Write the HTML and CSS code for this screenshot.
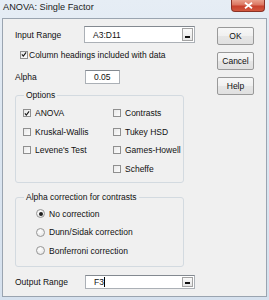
FILE: index.html
```html
<!DOCTYPE html>
<html>
<head>
<meta charset="utf-8">
<link rel="stylesheet" href="styles.css">
</head>
<body>
<div class="window">
  <div class="titlebar">
    <span class="title">ANOVA: Single Factor</span>
    <div class="close">
      <svg width="9" height="7" viewBox="0 0 9 7"><path d="M1 0.8 L8 6.2 M8 0.8 L1 6.2" stroke="#fff" stroke-width="1.8" fill="none"/></svg>
    </div>
  </div>
  <div class="client">
    <div class="form">
      <div class="field-row range-row">
        <span class="label">Input Range</span>
        <div class="input wide tall"><span class="value">A3:D11</span><span class="pick"><span class="bar"></span></span></div>
      </div>
      <div class="check-row headings">
        <span class="box"><svg width="8" height="8" viewBox="0 0 8 8"><path d="M1.2 3.8 L3.1 6 L6.8 1.2" stroke="#1a1a1a" stroke-width="1.5" fill="none"/></svg></span>
        <span class="text">Column headings included with data</span>
      </div>
      <div class="field-row alpha-row">
        <span class="label">Alpha</span>
        <div class="input small"><span class="value">0.05</span></div>
      </div>
      <fieldset class="group options">
        <legend>Options</legend>
        <div class="opt-grid">
          <div class="check-row"><span class="box"><svg width="8" height="8" viewBox="0 0 8 8"><path d="M1.2 3.8 L3.1 6 L6.8 1.2" stroke="#1a1a1a" stroke-width="1.5" fill="none"/></svg></span><span class="text">ANOVA</span></div>
          <div class="check-row"><span class="box"></span><span class="text">Contrasts</span></div>
          <div class="check-row"><span class="box"></span><span class="text">Kruskal-Wallis</span></div>
          <div class="check-row"><span class="box"></span><span class="text">Tukey HSD</span></div>
          <div class="check-row"><span class="box"></span><span class="text">Levene's Test</span></div>
          <div class="check-row"><span class="box"></span><span class="text">Games-Howell</span></div>
          <div class="check-row"></div>
          <div class="check-row"><span class="box"></span><span class="text">Scheffe</span></div>
        </div>
      </fieldset>
      <fieldset class="group correction">
        <legend>Alpha correction for contrasts</legend>
        <div class="radio-list">
          <div class="radio-row"><span class="radio on"><span class="dot"></span></span><span class="text">No correction</span></div>
          <div class="radio-row"><span class="radio"></span><span class="text">Dunn/Sidak correction</span></div>
          <div class="radio-row"><span class="radio"></span><span class="text">Bonferroni correction</span></div>
        </div>
      </fieldset>
      <div class="field-row output-row">
        <span class="label">Output Range</span>
        <div class="input wide"><span class="value">F3</span><span class="caret"></span><span class="pick"><span class="bar"></span></span></div>
      </div>
    </div>
    <div class="buttons">
      <div class="btn">OK</div>
      <div class="btn">Cancel</div>
      <div class="btn">Help</div>
    </div>
  </div>
</div>
</body>
</html>
```
FILE: styles.css
```css
* { box-sizing: border-box; }
html, body { margin: 0; padding: 0; }
body {
  width: 269px;
  height: 300px;
  overflow: hidden;
  font-family: "Liberation Sans", Arial, sans-serif;
  font-size: 8.5px;
  color: #111;
}
.window {
  width: 269px;
  height: 300px;
  display: flex;
  flex-direction: column;
  background: linear-gradient(180deg, #e6edf5 0%, #dce6f1 40%, #d6e1ee 100%);
}
.titlebar {
  height: 18px;
  display: flex;
  justify-content: space-between;
  align-items: flex-start;
  flex: none;
}
.title {
  font-size: 9.2px;
  color: #1b1b1b;
  margin-left: 3px;
  margin-top: 2px;
  line-height: 10px;
}
.close {
  width: 34px;
  height: 12px;
  margin-right: 4px;
  border: 1px solid #8a3226;
  border-top: none;
  border-radius: 0 0 4px 4px;
  background: linear-gradient(180deg, #e9a08c 0%, #db7560 45%, #c8412d 55%, #d2583f 100%);
  display: flex;
  align-items: center;
  justify-content: center;
}
.close svg { display: block; margin-top: -1px; }
.client {
  flex: 1;
  margin: 0 2px 3px 2px;
  border: 1px solid #9aa4b0;
  background: #f0f0f0;
  display: flex;
  padding: 7px 0 0 12px;
}
.form {
  width: 180px;
  display: flex;
  flex-direction: column;
}
.field-row {
  display: flex;
  align-items: center;
}
.label {
  width: 69px;
  line-height: 10px;
}
.input {
  position: relative;
  background: #fff;
  border: 1px solid #abb0b6;
  border-top-color: #838990;
  display: flex;
  align-items: center;
  padding-left: 8px;
  line-height: 10px;
}
.input.wide { width: 111px; height: 14px; }
.input.tall { height: 17px; }
.input.small { width: 35px; height: 14px; margin-left: 1px; }
.output-row .input { margin-left: 1px; width: 110px; }
.pick {
  position: absolute;
  right: 1px;
  top: 1px;
  bottom: 1px;
  width: 11px;
  border: 1px solid #a3a3a3;
  background: linear-gradient(180deg, #fafafa, #e6e6e6);
  display: flex;
  align-items: flex-end;
  justify-content: center;
  padding-bottom: 2px;
}
.bar { width: 5px; height: 2px; background: #111; }
.caret { width: 1px; height: 10px; background: #000; margin-left: 0; }
.range-row { height: 17px; }
.check-row {
  display: flex;
  align-items: center;
  line-height: 10px;
}
.box {
  width: 8px;
  height: 8px;
  border: 1px solid #8f8f8f;
  background: linear-gradient(135deg, #e8e8e8, #fcfcfc);
  display: flex;
  align-items: center;
  justify-content: center;
  margin-right: 4px;
  flex: none;
}
.box svg { display: block; width: 7px; height: 7px; }
.headings { margin-top: 6px; padding-left: 5px; height: 11px; }
.headings .box { margin-right: 1px; }
.alpha-row { margin-top: 10px; height: 14px; }
.group {
  margin: 6px 0 0 0;
  padding: 0;
  width: 169px;
  border: 1px solid #d3dae0;
  border-radius: 3px;
  min-width: 0;
}
.group legend {
  margin-left: 8px;
  padding: 0 2px;
  line-height: 10px;
  font-size: 8.5px;
}
.opt-grid {
  display: grid;
  grid-template-columns: 90px 1fr;
  grid-auto-rows: 18.6px;
  padding: 4px 0 4px 7px;
}
.correction { margin-top: 9px; }
.radio-list {
  display: flex;
  flex-direction: column;
  padding: 2px 0 6px 20px;
}
.radio-row {
  height: 18.5px;
  display: flex;
  align-items: center;
  line-height: 10px;
}
.radio {
  width: 9px;
  height: 9px;
  border-radius: 50%;
  border: 1px solid #969696;
  background: radial-gradient(circle at 40% 35%, #ffffff, #e0e0e0);
  margin-right: 4px;
  display: flex;
  align-items: center;
  justify-content: center;
  flex: none;
}
.dot { width: 4px; height: 4px; border-radius: 50%; background: #1e1e1e; }
.output-row { margin-top: 8px; height: 14px; }
.buttons {
  margin-left: 22px;
  margin-top: 1px;
  display: flex;
  flex-direction: column;
  gap: 7px;
}
.btn {
  width: 37px;
  height: 18px;
  border: 1px solid #999;
  border-radius: 2px;
  background: linear-gradient(180deg, #f7f7f7 0%, #f0f0f0 50%, #e6e6e6 51%, #e0e0e0 100%);
  display: flex;
  align-items: center;
  justify-content: center;
  line-height: 10px;
}
```
